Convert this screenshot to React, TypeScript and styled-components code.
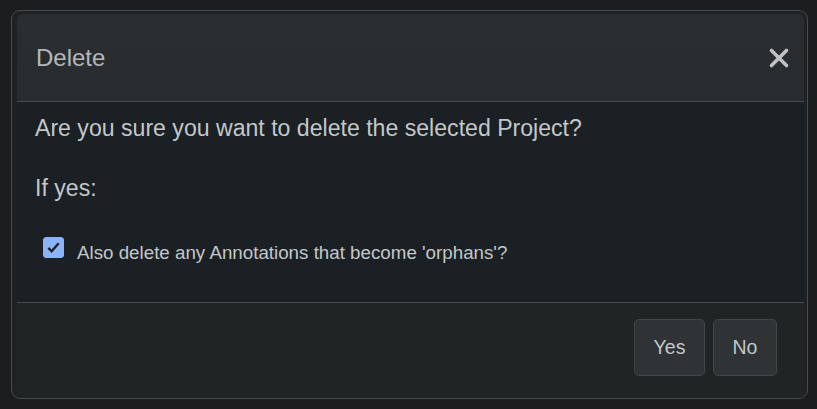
import React, { useState } from "react";
import styled, { createGlobalStyle } from "styled-components";

const Global = createGlobalStyle`
  html, body { margin: 0; padding: 0; background: #1b1d1e; }
  body { font-family: "Liberation Sans", Arial, sans-serif; }
  * { box-sizing: border-box; }
`;

const Page = styled.div`
  width: 817px;
  height: 409px;
  padding: 10px 9px 10px 11px;
  background: #1b1d1e;
`;

const Dialog = styled.div`
  height: 389px;
  border: 1px solid #464b4f;
  border-radius: 9px;
  padding: 3px 3px 0 5px;
  background: #1e2224;
  display: flex;
  flex-direction: column;
  overflow: hidden;
`;

const Header = styled.div`
  height: 88px;
  flex: none;
  display: flex;
  align-items: center;
  justify-content: space-between;
  padding: 0 12px 0 19px;
  background: linear-gradient(#2b2e30, #292c2e);
  border-bottom: 1px solid #464b4f;
  border-radius: 6px 6px 0 0;
`;

const Title = styled.h2`
  margin: 0;
  font-size: 24px;
  font-weight: normal;
  color: #b4b8bb;
`;

const Close = styled.button`
  width: 26px;
  height: 26px;
  border: 0;
  padding: 0;
  background: transparent;
  display: flex;
  align-items: center;
  justify-content: center;
`;

const Body = styled.div`
  flex: 1;
  background: #1a2024;
  padding: 12px 18px 0;
  color: #c3c7c9;
  font-size: 23.1px;
`;

const Para = styled.p<{ $gap: number }>`
  margin: 0 0 ${(p) => p.$gap}px;
  line-height: 28px;
`;

const CheckRow = styled.label`
  display: flex;
  align-items: flex-start;
  margin-left: 8px;
  font-size: 18.75px;
  line-height: 22px;
  color: #c3c7c9;
`;

const Box = styled.span<{ $on: boolean }>`
  width: 21px;
  height: 21px;
  flex: none;
  border-radius: 3px;
  background: ${(p) => (p.$on ? "#8ab4f8" : "transparent")};
  border: 1px solid #8ab4f8;
  display: flex;
  align-items: center;
  justify-content: center;
  margin-right: 13px;
`;

const Label = styled.span`
  padding-top: 5px;
`;

const Footer = styled.div`
  height: 96px;
  flex: none;
  background: #212425;
  border-top: 1px solid #464b4f;
  display: flex;
  justify-content: flex-end;
  align-items: flex-start;
  gap: 8px;
  padding: 16px 27px 0 0;
`;

const Button = styled.button<{ $w: number }>`
  width: ${(p) => p.$w}px;
  height: 57px;
  background: #2f3335;
  border: 1px solid #41464a;
  border-radius: 5px;
  color: #c3c7c9;
  font-family: "Liberation Sans", Arial, sans-serif;
  font-size: 19.5px;
`;

export default function App() {
  const [on, setOn] = useState(true);
  return (
    <Page>
      <Global />
      <Dialog>
        <Header>
          <Title>Delete</Title>
          <Close aria-label="Close">
            <svg width="24" height="24" viewBox="0 0 24 24">
              <path d="M4.5 4.5 L19.5 19.5 M19.5 4.5 L4.5 19.5" stroke="#bfc1c2" strokeWidth="3.6" strokeLinecap="round" />
            </svg>
          </Close>
        </Header>
        <Body>
          <Para $gap={32}>Are you sure you want to delete the selected Project?</Para>
          <Para $gap={35}>If yes:</Para>
          <CheckRow onClick={() => setOn(!on)}>
            <Box $on={on}>
              {on && (
                <svg width="15" height="15" viewBox="0 0 16 16">
                  <path d="M2.5 8.5 L6 12 L13.5 3.5" fill="none" stroke="#202124" strokeWidth="2.6" />
                </svg>
              )}
            </Box>
            <Label>Also delete any Annotations that become 'orphans'?</Label>
          </CheckRow>
        </Body>
        <Footer>
          <Button $w={71}>Yes</Button>
          <Button $w={64}>No</Button>
        </Footer>
      </Dialog>
    </Page>
  );
}
